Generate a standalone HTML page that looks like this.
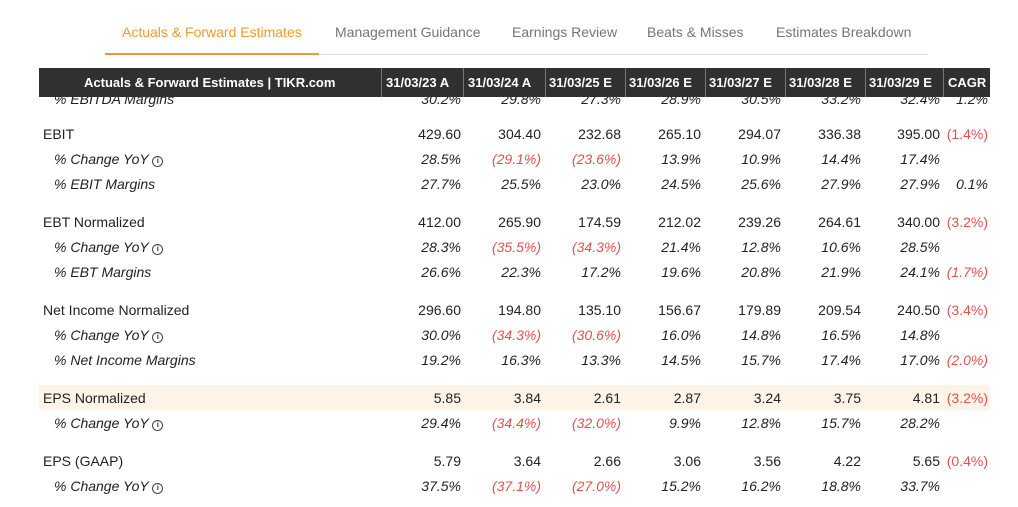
<!DOCTYPE html><html><head><style>
body{margin:0;width:1018px;height:507px;background:#fff;font-family:"Liberation Sans",sans-serif;position:relative;overflow:hidden;color:#222}
.t{position:absolute;top:24px;font-size:14px;color:#757575;white-space:nowrap}
.r{position:absolute;left:39px;width:951px;height:25px;font-size:14px}
.r span{position:absolute;top:5px;white-space:nowrap}
.r .l{left:4px}.r.s .l{left:15px;font-style:italic}
.s span{font-style:italic}
.n{color:#e0524a}
.hd{position:absolute;left:39px;top:68px;width:951px;height:29px;background:#303030;color:#fff;font-weight:bold;font-size:13px;z-index:2}
.hd span{position:absolute;top:7px;white-space:nowrap}
.hd i{position:absolute;top:0;width:1px;height:29px;background:#777}
.c{display:inline-block;width:9px;height:9px;border:1px solid #444;border-radius:50%;font-size:7px;font-style:normal;text-align:center;line-height:9px;vertical-align:1px}
</style></head><body>
<div class="t" style="left:122px;color:#ef9a2f">Actuals &amp; Forward Estimates</div>
<div class="t" style="left:335px">Management Guidance</div>
<div class="t" style="left:512px">Earnings Review</div>
<div class="t" style="left:647px">Beats &amp; Misses</div>
<div class="t" style="left:776px">Estimates Breakdown</div>
<div style="position:absolute;left:105px;top:54px;width:823px;height:1px;background:#ddd"></div>
<div style="position:absolute;left:105px;top:53px;width:214px;height:2px;background:#ef9a2f"></div>
<div class="hd"><span style="left:45px">Actuals &amp; Forward Estimates | TIKR.com</span>
<i style="left:342px"></i><span style="left:347px">31/03/23 A</span>
<i style="left:424px"></i><span style="left:429px">31/03/24 A</span>
<i style="left:506px"></i><span style="left:510px">31/03/25 E</span>
<i style="left:586px"></i><span style="left:590px">31/03/26 E</span>
<i style="left:666px"></i><span style="left:670px">31/03/27 E</span>
<i style="left:746px"></i><span style="left:750px">31/03/28 E</span>
<i style="left:826px"></i><span style="left:830px">31/03/29 E</span>
<i style="left:904px"></i><span style="left:909px">CAGR</span></div>
<div id="rows"></div>
<script>
const R=[e=>0,
[86,1,"% EBITDA Margins",["30.2%","29.8%","27.3%","28.9%","30.5%","33.2%","32.4%","1.2%"]],
[121,0,"EBIT",["429.60","304.40","232.68","265.10","294.07","336.38","395.00","(1.4%)"]],
[146,2,"% Change YoY",["28.5%","(29.1%)","(23.6%)","13.9%","10.9%","14.4%","17.4%",""]],
[171,1,"% EBIT Margins",["27.7%","25.5%","23.0%","24.5%","25.6%","27.9%","27.9%","0.1%"]],
[209,0,"EBT Normalized",["412.00","265.90","174.59","212.02","239.26","264.61","340.00","(3.2%)"]],
[234,2,"% Change YoY",["28.3%","(35.5%)","(34.3%)","21.4%","12.8%","10.6%","28.5%",""]],
[259,1,"% EBT Margins",["26.6%","22.3%","17.2%","19.6%","20.8%","21.9%","24.1%","(1.7%)"]],
[297,0,"Net Income Normalized",["296.60","194.80","135.10","156.67","179.89","209.54","240.50","(3.4%)"]],
[322,2,"% Change YoY",["30.0%","(34.3%)","(30.6%)","16.0%","14.8%","16.5%","14.8%",""]],
[347,1,"% Net Income Margins",["19.2%","16.3%","13.3%","14.5%","15.7%","17.4%","17.0%","(2.0%)"]],
[385,3,"EPS Normalized",["5.85","3.84","2.61","2.87","3.24","3.75","4.81","(3.2%)"]],
[410,2,"% Change YoY",["29.4%","(34.4%)","(32.0%)","9.9%","12.8%","15.7%","28.2%",""]],
[448,0,"EPS (GAAP)",["5.79","3.64","2.66","3.06","3.56","4.22","5.65","(0.4%)"]],
[473,2,"% Change YoY",["37.5%","(37.1%)","(27.0%)","15.2%","16.2%","18.8%","33.7%",""]]];
const ends=[422,502,582,662,742,822,901,949];let h="";
R.slice(1).forEach(([y,k,l,v])=>{h+=`<div class="r${k==1||k==2?' s':''}" style="top:${y}px;${k==3?'background:#fdf3e6':''}"><span class="l">${l}${k==2?' <b class="c">i</b>':''}</span>`;
v.forEach((x,i)=>{h+=`<span class="${x[0]=='('?'n':''}" style="right:${951-ends[i]}px">${x}</span>`});h+='</div>'});
document.getElementById('rows').innerHTML=h;
</script></body></html>
